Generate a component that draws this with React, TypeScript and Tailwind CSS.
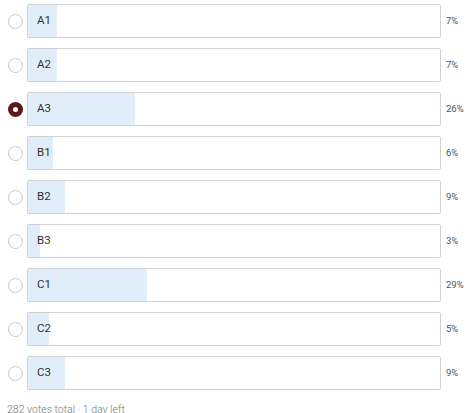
const options = [
  { label: 'A1', pct: 7 },
  { label: 'A2', pct: 7 },
  { label: 'A3', pct: 26, selected: true },
  { label: 'B1', pct: 6 },
  { label: 'B2', pct: 9 },
  { label: 'B3', pct: 3 },
  { label: 'C1', pct: 29 },
  { label: 'C2', pct: 5 },
  { label: 'C3', pct: 9 },
]

export default function App() {
  return (
    <div className="w-[474px] h-[413px] overflow-hidden bg-white pt-[4px] font-['Roboto',sans-serif]">
      <div className="flex flex-col gap-[10px]">
        {options.map((o) => (
          <div key={o.label} className="flex items-center h-[34px]">
            <div className="w-[27px] flex justify-center pl-[4px]">
              {o.selected ? (
                <div className="w-[15px] h-[15px] rounded-full bg-[#5b1a1c] flex items-center justify-center">
                  <div className="w-[5px] h-[5px] rounded-full bg-white" />
                </div>
              ) : (
                <div className="w-[15px] h-[15px] rounded-full border border-[#c8c8c8] bg-white" />
              )}
            </div>
            <div className="relative w-[414px] h-[34px] border border-[#d2d2d2] rounded-[2px] overflow-hidden bg-white">
              <div
                className="absolute left-0 top-0 bottom-0 bg-[#e2edfa]"
                style={{ width: `${o.pct}%` }}
              />
              <span className="relative flex items-center h-full pl-[9px] text-[11.5px] text-[#333]">
                {o.label}
              </span>
            </div>
            <span className="pl-[5px] text-[9.5px] text-[#555]">{o.pct}%</span>
          </div>
        ))}
      </div>
      <div className="pl-[7px] pt-[15px] text-[10.5px] text-[#777] font-light leading-none">
        282 votes total · 1 day left
      </div>
    </div>
  )
}
